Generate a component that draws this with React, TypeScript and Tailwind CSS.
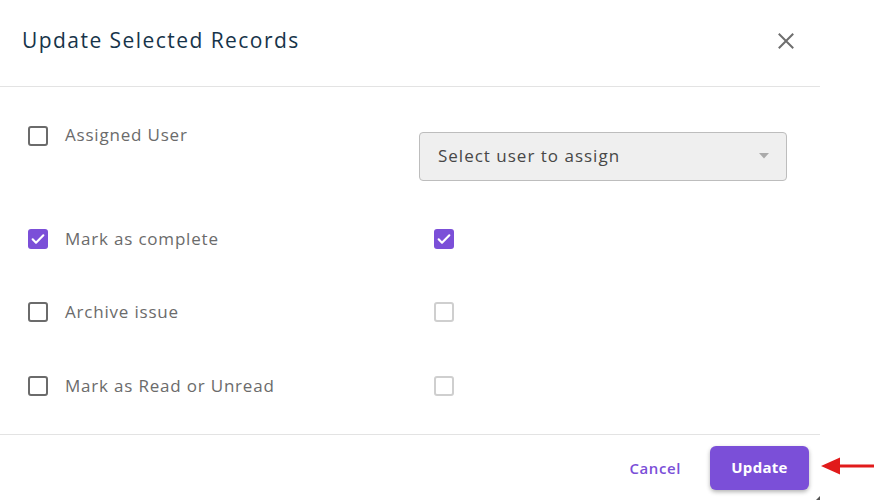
import { useState } from 'react';

type Row = { id: string; label: string; enabled: boolean; value: boolean };

const ROWS: Row[] = [
  { id: 'complete', label: 'Mark as complete', enabled: true, value: true },
  { id: 'archive', label: 'Archive issue', enabled: false, value: false },
  { id: 'read', label: 'Mark as Read or Unread', enabled: false, value: false },
];

function Box({ checked, muted }: { checked: boolean; muted?: boolean }) {
  if (checked) {
    return (
      <span className="flex h-[20px] w-[20px] shrink-0 items-center justify-center rounded-[3px] bg-[#7b4fd8]">
        <svg width="16" height="16" viewBox="0 0 24 24" fill="none" stroke="white" strokeWidth="3.2" strokeLinecap="round" strokeLinejoin="round">
          <path d="M4 12.5l5 5L20 6.5" />
        </svg>
      </span>
    );
  }
  return (
    <span
      className={`block h-[20px] w-[20px] shrink-0 rounded-[3px] border-2 ${
        muted ? 'border-[#cfcfcf]' : 'border-[#6b6b6b]'
      }`}
    />
  );
}

export default function App() {
  const [rows] = useState(ROWS);
  const [assign] = useState(false);

  return (
    <div className="flex h-[501px] w-[875px] overflow-hidden bg-white font-['Open_Sans',sans-serif]">
      <div className="relative flex w-[820px] shrink-0 flex-col">
        {/* header */}
        <div className="flex h-[87px] items-center justify-between border-b border-[#e3e3e3] pb-[5px] pl-[22px] pr-[24px]">
          <h2 className="text-[21px] font-medium leading-none tracking-[1.45px] text-[#17344a]">Update Selected Records</h2>
          <button aria-label="Close" className="flex h-[20px] w-[20px] items-center justify-center text-[#6e6e6e]">
            <svg width="16" height="16" viewBox="0 0 16 16" stroke="currentColor" strokeWidth="2" strokeLinecap="square">
              <path d="M1.5 1.5l13 13M14.5 1.5l-13 13" />
            </svg>
          </button>
        </div>

        {/* body */}
        <div className="flex flex-col border-b border-[#e3e3e3] pb-[38px] pl-[28px] pt-[39px]">
          <div className="flex h-[103px] items-start">
            <div className="flex w-[391px] items-start gap-[17px]">
              <Box checked={assign} />
              <span className="-mt-[2px] text-[17px] leading-[22px] tracking-[0.8px] text-[#6b6b6b]">Assigned User</span>
            </div>
            <div className="mt-[6px] flex h-[49px] w-[368px] items-center justify-between rounded-[4px] border border-[#bdbdbd] bg-[#efefef] pb-[1px] pl-[18px] pr-[17px]">
              <span className="text-[17px] tracking-[1px] text-[#474747]">Select user to assign</span>
              <svg width="10" height="6" viewBox="0 0 10 6">
                <path d="M0 0h10L5 5.5z" fill="#aaaaaa" />
              </svg>
            </div>
          </div>
          {rows.map((r, i) => (
            <div key={r.id} className={`flex items-start ${i < rows.length - 1 ? (i === 0 ? 'h-[73px]' : 'h-[74px]') : 'h-[20px]'}`}>
              <div className="flex w-[406px] items-center gap-[17px]">
                <Box checked={r.enabled} />
                <span className="text-[17px] leading-[20px] tracking-[0.8px] text-[#6b6b6b]">{r.label}</span>
              </div>
              <Box checked={r.value} muted={!r.value} />
            </div>
          ))}
        </div>

        {/* footer */}
        <div className="flex flex-1 items-start justify-end gap-[29px] pr-[11px] pt-[11px]">
          <button className="mt-[11px] text-[15px] font-semibold tracking-[0.6px] text-[#7b4fd8]">Cancel</button>
          <button className="h-[44px] w-[99px] rounded-[6px] bg-[#7b4fd8] pb-[2px] text-[15px] font-bold tracking-[0.3px] text-white shadow-[0_2px_4px_rgba(0,0,0,0.3)]">
            Update
          </button>
        </div>
        <svg className="absolute bottom-[1px] right-0" width="4" height="4" viewBox="0 0 4 4">
          <path d="M4 0v4H0z" fill="#555" />
        </svg>
      </div>

      {/* annotation arrow */}
      <div className="flex flex-1 items-start pl-[1px] pt-[457px]">
        <svg width="53" height="18" viewBox="0 0 53 18">
          <path d="M0 9L19 0.5v7h34v3H19v7z" fill="#e11b1b" />
        </svg>
      </div>
    </div>
  );
}
